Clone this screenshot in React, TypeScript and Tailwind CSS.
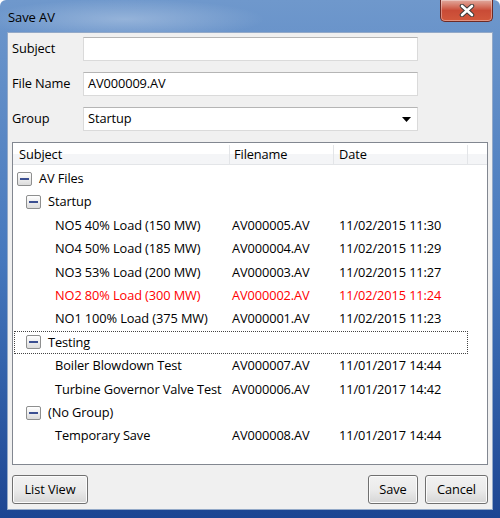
import React from "react";

type Row = {
  kind: "group" | "item";
  level: number;
  subject: string;
  file?: string;
  date?: string;
  red?: boolean;
  focus?: boolean;
};

const rows: Row[] = [
  { kind: "group", level: 0, subject: "AV Files" },
  { kind: "group", level: 1, subject: "Startup" },
  { kind: "item", level: 2, subject: "NO5 40% Load (150 MW)", file: "AV000005.AV", date: "11/02/2015 11:30" },
  { kind: "item", level: 2, subject: "NO4 50% Load (185 MW)", file: "AV000004.AV", date: "11/02/2015 11:29" },
  { kind: "item", level: 2, subject: "NO3 53% Load (200 MW)", file: "AV000003.AV", date: "11/02/2015 11:27" },
  { kind: "item", level: 2, subject: "NO2 80% Load (300 MW)", file: "AV000002.AV", date: "11/02/2015 11:24", red: true },
  { kind: "item", level: 2, subject: "NO1 100% Load (375 MW)", file: "AV000001.AV", date: "11/02/2015 11:23" },
  { kind: "group", level: 1, subject: "Testing", focus: true },
  { kind: "item", level: 2, subject: "Boiler Blowdown Test", file: "AV000007.AV", date: "11/01/2017 14:44" },
  { kind: "item", level: 2, subject: "Turbine Governor Valve Test", file: "AV000006.AV", date: "11/01/2017 14:42" },
  { kind: "group", level: 1, subject: "(No Group)" },
  { kind: "item", level: 2, subject: "Temporary Save", file: "AV000008.AV", date: "11/01/2017 14:44" },
];

function Expander() {
  return (
    <span className="flex h-[14px] w-[15px] shrink-0 items-center justify-center rounded-[2px] border border-[#8e8f8f] bg-gradient-to-b from-[#ffffff] to-[#dcdcdc]">
      <span className="h-[2px] w-[9px] bg-[#3b4f91]" />
    </span>
  );
}

function TextBox({ value }: { value?: string }) {
  return (
    <div className="flex h-[24px] w-[335px] items-center border border-[#dadada] border-t-[#b5b5b5] bg-white px-[4px]">
      {value}
    </div>
  );
}

function WinButton({ label, w }: { label: string; w: string }) {
  return (
    <button
      className={`${w} h-[29px] rounded-[3px] border border-[#707070] bg-gradient-to-b from-[#f2f2f2] via-[#ebebeb] to-[#d6d6d6] text-black shadow-[inset_0_0_0_1px_#fcfcfc]`}
    >
      {label}
    </button>
  );
}

export default function App() {
  return (
    <div
      className="flex h-[518px] w-[500px] flex-col overflow-hidden rounded-t-[6px] bg-gradient-to-b from-[#6f98cc] via-[#4678bd] to-[#1c4592] text-[12.8px] tracking-[-0.1px] text-black"
      style={{ fontFamily: '"Open Sans", "Noto Sans", sans-serif' }}
    >
      {/* Title bar */}
      <div className="relative flex h-[32px] shrink-0 items-center bg-[radial-gradient(ellipse_40%_90%_at_25%_60%,rgba(255,255,255,0.28),transparent_70%)] pl-[8px] pt-[3px]">
        <span className="text-[13px] text-black">Save AV</span>
        <div className="absolute right-[7px] top-0 flex h-[22px] w-[53px] items-center justify-center rounded-b-[5px] border border-t-0 border-[#6d2a25] bg-gradient-to-b from-[#e0a99e] via-[#c94b36] to-[#d2583c] shadow-[inset_0_0_0_1px_rgba(255,255,255,0.35)]">
          <svg width="16" height="13" viewBox="0 0 16 13">
            <path d="M3 2 L13 11 M13 2 L3 11" stroke="#3b3b3b" strokeWidth="4.5" strokeLinecap="round" />
            <path d="M3 2 L13 11 M13 2 L3 11" stroke="#ffffff" strokeWidth="2.6" strokeLinecap="round" />
          </svg>
        </div>
      </div>

      {/* Client area */}
      <div className="mx-[7px] flex h-[478px] flex-col border border-[#93a9c8] bg-[#f0f0f0]">
        {/* Form rows */}
        <div className="flex flex-col gap-[11px] pt-[4px]">
          <div className="flex items-center">
            <span className="w-[75px] pl-[4px]">Subject</span>
            <TextBox />
          </div>
          <div className="flex items-center">
            <span className="w-[75px] pl-[4px]">File Name</span>
            <TextBox value="AV000009.AV" />
          </div>
          <div className="flex items-center">
            <span className="w-[75px] pl-[4px]">Group</span>
            <div className="flex h-[24px] w-[335px] items-center justify-between border border-[#dadada] border-t-[#b5b5b5] bg-white pl-[4px] pr-[6px]">
              <span>Startup</span>
              <svg width="9" height="5" viewBox="0 0 9 5">
                <path d="M0 0 H9 L4.5 5 Z" fill="#000" />
              </svg>
            </div>
          </div>
        </div>

        {/* Tree list */}
        <div className="mx-[4px] mt-[11px] flex h-[323px] flex-col border border-[#828790] bg-white">
          <div className="flex h-[22px] shrink-0 items-stretch border-b border-[#e3e5e8] bg-gradient-to-b from-[#ffffff] from-50% to-[#f4f5f7] to-50% pt-[2px]">
            <div className="flex w-[217px] items-center border-r border-[#e3e5e8] pl-[6px]">Subject</div>
            <div className="flex w-[104px] items-center border-r border-[#e3e5e8] pl-[4px]">Filename</div>
            <div className="flex w-[134px] items-center border-r border-[#e3e5e8] pl-[5px]">Date</div>
            <div className="flex-1" />
          </div>
          <div className="flex flex-col pt-[2px]">
            {rows.map((r, i) => (
              <div
                key={i}
                className={`ml-[1px] flex h-[23.4px] w-[454px] items-center ${r.focus ? "border border-dotted border-[#444]" : "border border-transparent"} ${r.red ? "text-[#ff0000]" : "text-black"}`}
              >
                {r.kind === "group" ? (
                  <div className={`flex items-center gap-[7px] ${r.level === 0 ? "pl-[2px]" : "pl-[11px]"}`}>
                    <Expander />
                    <span>{r.subject}</span>
                  </div>
                ) : (
                  <>
                    <span className="w-[217px] shrink-0 whitespace-nowrap pl-[40px]">{r.subject}</span>
                    <span className="w-[107px] shrink-0 whitespace-nowrap">{r.file}</span>
                    <span className="whitespace-nowrap">{r.date}</span>
                  </>
                )}
              </div>
            ))}
          </div>
        </div>

        {/* Buttons */}
        <div className="mx-[4px] mt-[10px] flex items-center">
          <WinButton label="List View" w="w-[76px]" />
          <div className="flex-1" />
          <WinButton label="Save" w="w-[50px]" />
          <div className="w-[7px]" />
          <WinButton label="Cancel" w="w-[63px]" />
        </div>
      </div>
    </div>
  );
}
